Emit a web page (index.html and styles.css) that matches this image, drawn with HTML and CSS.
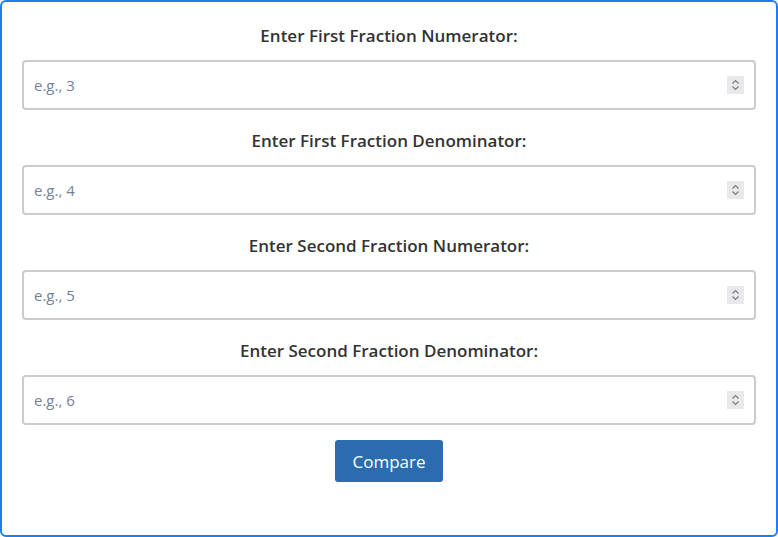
FILE: index.html
```html
<!DOCTYPE html>
<html lang="en">
<head>
    <meta charset="UTF-8">
    <meta name="viewport" content="width=device-width, initial-scale=1.0">
    <title>Fraction Comparison</title>
    <link rel="stylesheet" href="styles.css">
</head>
<body>
    <div class="compare-container">
        <form id="compareForm">
            <div class="form-group">
                <label for="num1">Enter First Fraction Numerator:</label>
                <div class="input-wrap">
                    <input type="number" id="num1" name="num1" placeholder="e.g., 3">
                    <span class="spinner"><svg viewBox="0 0 17 17"><path d="M5.5 7 8.5 4 11.5 7M5.5 10 8.5 13 11.5 10"/></svg></span>
                </div>
            </div>

            <div class="form-group">
                <label for="den1">Enter First Fraction Denominator:</label>
                <div class="input-wrap">
                    <input type="number" id="den1" name="den1" placeholder="e.g., 4">
                    <span class="spinner"><svg viewBox="0 0 17 17"><path d="M5.5 7 8.5 4 11.5 7M5.5 10 8.5 13 11.5 10"/></svg></span>
                </div>
            </div>

            <div class="form-group">
                <label for="num2">Enter Second Fraction Numerator:</label>
                <div class="input-wrap">
                    <input type="number" id="num2" name="num2" placeholder="e.g., 5">
                    <span class="spinner"><svg viewBox="0 0 17 17"><path d="M5.5 7 8.5 4 11.5 7M5.5 10 8.5 13 11.5 10"/></svg></span>
                </div>
            </div>

            <div class="form-group">
                <label for="den2">Enter Second Fraction Denominator:</label>
                <div class="input-wrap">
                    <input type="number" id="den2" name="den2" placeholder="e.g., 6">
                    <span class="spinner"><svg viewBox="0 0 17 17"><path d="M5.5 7 8.5 4 11.5 7M5.5 10 8.5 13 11.5 10"/></svg></span>
                </div>
            </div>

            <div class="form-actions">
                <button type="submit" class="compare-btn">Compare</button>
            </div>
        </form>
    </div>
</body>
</html>
```

FILE: styles.css
```css
:root {
    --frame: #1a80ee;
    --primary: #2b6cb0;
    --text-primary: #333333;
    --placeholder: #758296;
    --input-border: #cccccc;
}

* {
    box-sizing: border-box;
    margin: 0;
    padding: 0;
}

body {
    font-family: 'Open Sans', 'Noto Sans', Arial, sans-serif;
    background: #ffffff;
    color: var(--text-primary);
}

.compare-container {
    height: 537px;
    border: 2px solid var(--frame);
    border-radius: 6px;
    padding: 23px 20px;
}

.form-group {
    display: flex;
    flex-direction: column;
    margin-bottom: 20px;
}

.form-group label {
    display: block;
    text-align: center;
    font-weight: 600;
    font-size: 17px;
    line-height: 22px;
    margin-bottom: 13px;
}

.input-wrap {
    position: relative;
}

.form-group input {
    display: block;
    width: 100%;
    height: 50px;
    padding: 0 10px;
    border: 2px solid var(--input-border);
    border-radius: 4px;
    font-family: inherit;
    font-size: 15px;
    color: var(--text-primary);
    -moz-appearance: textfield;
}

.form-group input::placeholder {
    color: var(--placeholder);
}

.form-group input::-webkit-inner-spin-button,
.form-group input::-webkit-outer-spin-button {
    -webkit-appearance: none;
    margin: 0;
}

/* stand-in for the browser's number stepper */
.spinner {
    position: absolute;
    top: 16px;
    right: 12px;
    width: 17px;
    height: 18px;
    background: #e9e9ec;
    pointer-events: none;
}

.spinner svg {
    display: block;
    width: 17px;
    height: 18px;
    fill: none;
    stroke: #7a7a80;
    stroke-width: 1.2;
}

.form-actions {
    display: flex;
    justify-content: center;
    margin-top: -5px;
}

.compare-btn {
    width: 108px;
    height: 42px;
    background: var(--primary);
    color: #ffffff;
    border: none;
    border-radius: 3px;
    font-family: inherit;
    font-size: 17px;
    cursor: pointer;
}
```
